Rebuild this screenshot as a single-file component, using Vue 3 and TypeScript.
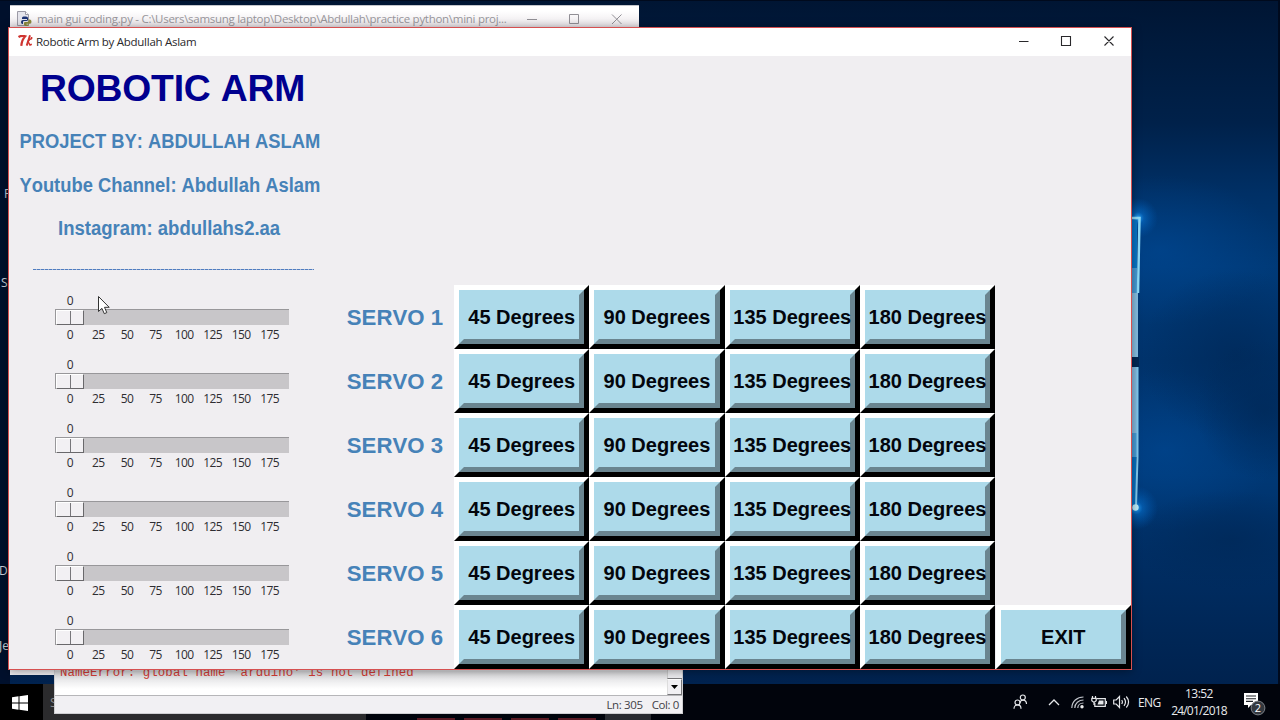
<script setup lang="ts">
const servos: number[] = [1, 2, 3, 4, 5, 6]
const angles: number[] = [45, 90, 135, 180]
const ticks: number[] = [0, 25, 50, 75, 100, 125, 150, 175]
</script>

<template>
  <div class="desktop">
    <svg class="wallpaper" width="1280" height="720" viewBox="0 0 1280 720" aria-hidden="true">
      <defs>
        <linearGradient id="sky" x1="0" y1="0" x2="0" y2="1">
          <stop offset="0" stop-color="#001533" />
          <stop offset="0.06" stop-color="#001a3c" />
          <stop offset="0.17" stop-color="#00214a" />
          <stop offset="0.27" stop-color="#003066" />
          <stop offset="0.37" stop-color="#003a78" />
          <stop offset="0.5" stop-color="#00336c" />
          <stop offset="0.66" stop-color="#003875" />
          <stop offset="0.77" stop-color="#002e64" />
          <stop offset="0.95" stop-color="#00224e" />
        </linearGradient>
        <radialGradient id="glow"><stop offset="0" stop-color="#004c9c" stop-opacity="0.5" /><stop offset="1" stop-color="#004c9c" stop-opacity="0" /></radialGradient>
        <radialGradient id="shade"><stop offset="0" stop-color="#002857" stop-opacity="0.7" /><stop offset="1" stop-color="#002857" stop-opacity="0" /></radialGradient>
        <radialGradient id="spark"><stop offset="0" stop-color="#35b0ff" /><stop offset="0.3" stop-color="#0879dc" stop-opacity="0.5" /><stop offset="1" stop-color="#0060c0" stop-opacity="0" /></radialGradient>
      </defs>
      <rect width="1280" height="720" fill="url(#sky)" />
      <rect width="10" height="720" fill="#00102c" />
      <ellipse cx="1160" cy="250" rx="120" ry="75" fill="url(#glow)" />
      <ellipse cx="1165" cy="450" rx="110" ry="80" fill="url(#glow)" />
      <ellipse cx="1235" cy="355" rx="95" ry="85" fill="url(#shade)" />
      <ellipse cx="1265" cy="410" rx="70" ry="70" fill="url(#shade)" />
      <ellipse cx="1230" cy="540" rx="100" ry="50" fill="url(#shade)" />
      <circle cx="1138" cy="218" r="20" fill="url(#spark)" />
      <circle cx="1136" cy="508" r="22" fill="url(#spark)" />
      <rect x="1131" y="220" width="6" height="48" fill="#0873c4" />
      <rect x="1131" y="268" width="6" height="25" fill="#4598d3" />
      <rect x="1131" y="293" width="7" height="64" fill="#86bde1" />
      <rect x="1131" y="357" width="8" height="10" fill="#002754" />
      <rect x="1131" y="367" width="7" height="66" fill="#82b9df" />
      <rect x="1131" y="433" width="6" height="24" fill="#479bd6" />
      <rect x="1131" y="457" width="5" height="50" fill="#0870bf" />
      <path d="M1131 218h8.500l-1.500 75" fill="none" stroke="#8edcfa" stroke-width="2.500" />
      <path d="M1137.500 367v90l-1.500 50" fill="none" stroke="#83caef" stroke-width="2" />
      <circle cx="1135.500" cy="507.500" r="3.200" fill="#bdecfa" />
      <rect x="1278" width="2" height="720" fill="#000a1d" />
      <rect width="1280" height="1" fill="#000a1d" />
    </svg>

    <div class="shortcut s1">F</div>
    <div class="shortcut s2">S</div>
    <div class="shortcut s3">D</div>
    <div class="shortcut s4">Je</div>

    <footer class="taskbar">
      <div class="start">
        <svg width="16" height="16" viewBox="0 0 16 16" fill="#fff"><path d="M0 2.200 6.500 1.300v6.200H0zM7.500 1.150 16 0v7.500H7.500zM0 8.500h6.500v6.200L0 13.800zM7.500 8.500H16V16l-8.500-1.150z" /></svg>
      </div>
      <div class="search">S</div>
      <div class="tasks"><i></i><i></i><i></i><i></i><b></b></div>
      <div class="tray">
        <svg class="people" width="15" height="16" viewBox="0 0 15 16"><g fill="none" stroke="#e5e7ea" stroke-width="1.200"><circle cx="9.800" cy="3.500" r="2.500" /><path d="M7 9c0-4 6.500-4 6.500 1" /><circle cx="4.500" cy="8.500" r="2.500" /><path d="M1 14.700c0-5 7-5 7 0" /></g></svg>
        <svg class="chevron" width="12" height="8" viewBox="0 0 12 8"><path d="m1 7 5-5 5 5" fill="none" stroke="#e5e7ea" stroke-width="1.300" /></svg>
        <svg class="wifi" width="13" height="13" viewBox="0 0 13 13"><g fill="none" stroke="#bfc3c9" stroke-width="1.200"><path d="M.8 12C1 5.500 6 1 12.500 1" /><path d="M3.800 12c0-4.500 4-8 8.700-8" /><path d="M6.800 12c0-3 2.500-5 5.700-5" /></g><circle cx="11" cy="10.800" r="1.700" fill="#eee" /></svg>
        <svg class="battery" width="16" height="12" viewBox="0 0 16 12"><g fill="none" stroke="#e5e7ea" stroke-width="1.200"><path d="M5.500 2.600h8.800v7.800H3.800V7" /><path d="M1.500 0v2.200M4.500 0v2.200M.8 2.300h4.400v2.500L3 6.500.8 4.800zM3 6.500V9" /></g><path d="M8 4.500h4.500v4H6.500zM15 5h1v3h-1z" fill="#e5e7ea" /></svg>
        <svg class="sound" width="17" height="14" viewBox="0 0 17 14"><g fill="none" stroke="#e5e7ea" stroke-width="1.200"><path d="M.7 5h2.500l3.300-3.500v11L3.200 9H.7z" /><path d="M8.700 5q1.400 2 0 4M11 3.200q3 3.800 0 7.600M13.300 1.500q4.500 5.500 0 11" /></g></svg>
        <span class="lang">ENG</span>
        <div class="clock"><span>13:52</span><span class="date">24/01/2018</span></div>
        <div class="notify">
          <svg width="25" height="25" viewBox="0 0 25 25"><path d="M2 2h14v12H9l-3 3v-3H2z" fill="#fff" /><path d="M4 5h10M4 7.700h10M4 10.400h7" stroke="#20242a" stroke-width="1.100" /><circle cx="16" cy="17" r="6.900" fill="#33383f" stroke="#7b8087" /><text x="16" y="21" text-anchor="middle" fill="#fff" font-size="11">2</text></svg>
        </div>
      </div>
    </footer>

    <section class="editor">
      <header>
        <svg width="16" height="16" viewBox="0 0 16 16"><path d="M1.500.5h8l3 3v11h-11z" fill="#e5e5ec" stroke="#9c9ba6" /><path d="M9.500.5v3h3" fill="#fff" stroke="#9c9ba6" /><path d="M10 5.500H7.500Q6 5.500 6 7v1h5v1H7Q5 9 5 11t1.500 2H7v-2q0-1 1-1h2.500q1.500 0 1.500-1.500V7q0-1.500-2-1.500" fill="#1c3474" /><path d="M12.500 8.500v1.200q0 1.300-1.500 1.300H9q-1 0-1 1v1.500q0 1.500 2.500 1.500t2.500-1.500h-2.500v-.7H14q1.500 0 1.500-2t-1.500-2.300z" fill="#8b8b3c" /></svg>
        <span>main gui coding.py - C:\Users\samsung laptop\Desktop\Abdullah\practice python\mini proj...</span>
        <svg class="controls" width="100" height="12" viewBox="0 0 100 12" fill="none" stroke="#918f95"><path d="M1 6.500h10M43.500 1.500h9v9h-9zM86 1.500l9.500 9.500M95.500 1.500 86 11" /></svg>
      </header>
    </section>

    <section class="shell">
      <div class="output">
        <pre>NameError: global name 'arduino' is not defined</pre>
        <div class="scroll"><i></i><button><svg width="7" height="4" viewBox="0 0 7 4"><path d="M0 0h7L3.500 4z" /></svg></button></div>
      </div>
      <div class="status"><span>Ln: 305</span><span>Col: 0</span></div>
    </section>

    <main class="window">
      <header class="titlebar">
        <svg width="15" height="12" viewBox="0 0 15 12" fill="none" stroke="#cf3430"><path d="M.5 2Q3.500 0 7.200 1.300 4 4.500 3.300 10.800" stroke-width="2.200" /><path d="M12 .3 8.700 10.600" stroke-width="1.900" /><path d="M14 3.500q-2.500.3-4 3l2 3.500 1.800-.8M13.600 2v2" stroke-width="1.500" /></svg>
        <span>Robotic Arm by Abdullah Aslam</span>
        <svg class="controls" width="98" height="12" viewBox="0 0 98 12" fill="none" stroke="#29282b" stroke-width="1.100"><path d="M1 6.500h9.500M43.500 1.500h9v9h-9zM86.500 1.500l9 9M95.500 1.500l-9 9" /></svg>
      </header>
      <div class="body">
        <div class="info">
          <h1>ROBOTIC ARM</h1>
          <p class="project">PROJECT BY: ABDULLAH ASLAM</p>
          <p class="channel">Youtube Channel: Abdullah Aslam</p>
          <p class="insta">Instagram: abdullahs2.aa</p>
          <hr />
        </div>
        <div v-for="servo in servos" :key="servo" class="servo-row">
          <div class="scale">
            <span class="value">0</span>
            <div class="trough"><div class="thumb"><i></i></div></div>
            <div class="ticks"><span v-for="tick in ticks" :key="tick">{{ tick }}</span></div>
          </div>
          <div class="servo">SERVO {{ servo }}</div>
          <button v-for="angle in angles" :key="angle" class="bevel"><span>{{ angle }} Degrees</span></button>
          <button v-if="servo === 6" class="bevel exit"><span>EXIT</span></button>
        </div>
      </div>
    </main>

    <svg class="cursor" width="13" height="20" viewBox="0 0 13 20"><path d="M1.500 1.500v15l3.400-3.200 2.400 5.400 2.500-1.100-2.300-5.300h4.700z" fill="#fff" stroke="#333" /></svg>
  </div>
</template>

<style>
html, body { margin: 0; overflow: hidden; background: #00132f; }
</style>

<style scoped>
* { box-sizing: border-box; }
.desktop { position: relative; width: 1280px; height: 720px; overflow: hidden; font-family: "Open Sans", "Noto Sans", sans-serif; font-size: 12px; }
svg { display: block; flex: none; }
button { font: inherit; padding: 0; margin: 0; }
.wallpaper { position: absolute; inset: 0; }
.shortcut { position: absolute; left: 4px; color: #ccd1da; font-size: 12px; line-height: 16px; }
.s1 { top: 186px; }
.s2 { top: 275px; left: 1px; }
.s3 { top: 563px; left: -1px; }
.s4 { top: 638px; left: -1px; }

.editor { position: absolute; left: 10px; top: 5px; width: 629px; height: 670px; background: #efeef1; border-top: 1px solid #c3c5cb; }
.editor header { display: flex; align-items: center; height: 25px; padding: 0 13px 0 6px; background: linear-gradient(#fff 20%, #e6e0e5); color: #98969b; }
.editor header span { margin-left: 5px; flex: 1; white-space: nowrap; letter-spacing: -0.28px; font-size: 11.5px; }

.shell { position: absolute; left: 54px; top: 600px; width: 629px; height: 114px; display: flex; flex-direction: column; background: #f1f0f3; border: 1px solid #cfcfd2; }
.output { display: flex; height: 97px; background: linear-gradient(#fff 68px, #d7d7da 70px, #fff 88px); border-bottom: 1px solid #b6b6b9; }
.output pre { flex: 1; margin: 64px 0 0 5px; font: 12.4px/16px "Liberation Mono", monospace; color: #d13b35; letter-spacing: 0.09px; }
.scroll { display: flex; flex-direction: column; justify-content: flex-end; width: 15px; background: #ececef; }
.scroll i { height: 40px; border-bottom: 1px solid #77777a; border-left: 1px solid #ccc; }
.scroll button { display: grid; place-items: center; height: 16px; border: 1px solid; border-color: #fff #77777a #77777a #ddd; background: #f1f0f3; }
.status { flex: 1; display: flex; justify-content: flex-end; gap: 9px; padding: 1px 3px 0 0; color: #424146; font-size: 11.5px; line-height: 16px; letter-spacing: -0.38px; }

.taskbar { position: absolute; inset: 684px 0 0 0; display: flex; background: #01040c; }
.start { width: 43px; padding: 11px 0 0 12px; background: #000; }
.search { width: 323px; padding: 9px 0 0 7px; background: #2b2b2d; color: #8c8c8e; font-size: 13px; line-height: 18px; }
.tasks { display: flex; align-items: flex-end; gap: 9px; padding-left: 51px; width: 310px; }
.tasks i { width: 38px; height: 2px; background: #5c1b24; }
.tasks b { width: 46px; height: 100%; background: #292b31; }
.tray { flex: 1; display: flex; align-items: center; padding: 0 13px 0 0; justify-content: flex-end; color: #e8eaed; }
.people { margin-right: 20px; }
.chevron { margin-right: 11px; }
.wifi { margin-right: 7px; }
.battery { margin-right: 6px; }
.sound { margin-right: 8px; }
.lang { width: 24px; letter-spacing: -0.55px; }
.clock { display: flex; flex-direction: column; width: 58px; margin: 0 14px 0 8px; text-align: center; line-height: 17px; letter-spacing: -0.55px; }
.date { letter-spacing: -0.8px; }
.notify { padding-top: 2px; }

.window { position: absolute; left: 8px; top: 27px; width: 1124px; height: 643px; border: 1px solid #d65050; background: #f0eef1; box-shadow: 0 1px 9px rgba(0, 0, 0, 0.4); }
.titlebar { display: flex; align-items: center; height: 28px; padding: 0 15px 2px 9px; background: #fff; color: #29282b; }
.titlebar span { flex: 1; margin-left: 3px; font-size: 11.5px; letter-spacing: -0.27px; }
.body { display: flex; flex-direction: column; }
.info { display: flex; flex-direction: column; align-items: center; width: 322px; height: 229px; font-family: "Liberation Sans", Arial, sans-serif; color: #4682b8; }
h1 { margin: 0; padding-left: 5px; font-size: 37.3px; line-height: 64px; letter-spacing: -0.2px; color: #00008f; font-kerning: none; white-space: nowrap; }
.info p { margin: 0; font-size: 20px; font-weight: bold; line-height: 43.500px; font-kerning: none; white-space: nowrap; }
.project { transform: scaleX(0.918); }
.channel { transform: scaleX(0.918); }
.insta { transform: scaleX(0.925) translateX(-1px); }
hr { width: 281px; height: 1px; margin: 18.500px 0 0 6px; border: 0; background: repeating-linear-gradient(90deg, #4f7cc0 0 3px, #a9bad6 3px 4px); }
.servo-row { display: flex; height: 64px; }
.scale { width: 234px; margin-left: 46px; padding-top: 8px; color: #2e2d31; letter-spacing: -0.6px; font-size: 12px; line-height: 16px; }
.value { display: block; width: 30px; text-align: center; }
.trough { height: 16px; background: #c8c6c9; border-top: 1px solid #98979a; border-left: 1px solid #98979a; }
.thumb { display: flex; width: 28px; height: 15px; border: 1px solid; border-color: #fff #69686b #69686b #fff; background: #f2f0f3; }
.thumb i { width: 14px; border-right: 1px solid #77767a; }
.ticks { display: grid; grid-template-columns: repeat(8, 28.570px); width: 234px; padding-left: 0.500px; margin-top: 2px; text-align: center; }
.servo { width: 165px; padding: 1px 11px 0 0; text-align: right; font: bold 22.200px/64px "Liberation Sans", Arial, sans-serif; color: #4682b8; font-kerning: none; }
.bevel { flex: none; width: 135.300px; height: 64px; border: 5px solid; border-color: #fff #000 #000 #fff; background: #addaea; color: #03060d; font: bold 20px/45px "Liberation Sans", Arial, sans-serif; }
.bevel span { display: flex; justify-content: center; width: 125.300px; height: 54px; border: 5px solid; border-color: #addaea #6a8590 #6a8590 #addaea; white-space: nowrap; font-kerning: none; }
.exit { margin-left: 0.500px; }
.cursor { position: absolute; left: 97px; top: 295px; }
</style>
